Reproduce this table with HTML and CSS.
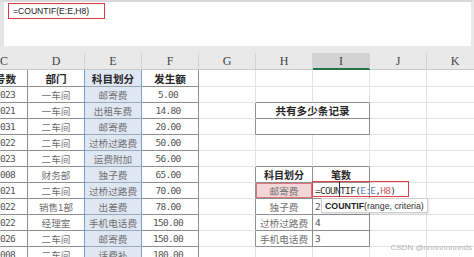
FILE: index.html
```html
<!DOCTYPE html>
<html lang="zh">
<head>
<meta charset="utf-8">
<link rel="stylesheet" href="styles.css">
</head>
<body>
<div class="fbar"><div class="fref">=COUNTIF(E:E,H8)</div></div>
<div class="sheet">
  <div class="ch"><span class="cl clc">C</span></div>
  <div class="ch"><span class="cl">D</span></div>
  <div class="ch"><span class="cl">E</span></div>
  <div class="ch"><span class="cl">F</span></div>
  <div class="ch"><span class="cl">G</span></div>
  <div class="ch"><span class="cl">H</span></div>
  <div class="ch on"><span class="cl">I</span></div>
  <div class="ch"><span class="cl">J</span></div>
  <div class="ch"><span class="cl">K</span></div>

  <div class="c t cc hd hcc">凭证号数</div>
  <div class="c t d hd">部门</div>
  <div class="c t e hd">科目划分</div>
  <div class="c t hd">发生额</div>
  <div class="c"></div><div class="c"></div><div class="c"></div><div class="c"></div><div class="c"></div>

  <div class="c t cc num">-023</div>
  <div class="c t d">一车间</div>
  <div class="c t e">邮寄费</div>
  <div class="c t num fn">5.00</div>
  <div class="c"></div><div class="c bb"></div><div class="c bb"></div><div class="c"></div><div class="c"></div>

  <div class="c t cc num">-021</div>
  <div class="c t d">一车间</div>
  <div class="c t e">出租车费</div>
  <div class="c t num fn">14.80</div>
  <div class="c br"></div><div class="c t span2 hd">共有多少条记录</div><div class="c"></div><div class="c"></div>

  <div class="c t cc num">-031</div>
  <div class="c t d">二车间</div>
  <div class="c t e">邮寄费</div>
  <div class="c t num fn">20.00</div>
  <div class="c br"></div><div class="c t span2"></div><div class="c"></div><div class="c"></div>

  <div class="c t cc num">-022</div>
  <div class="c t d">二车间</div>
  <div class="c t e">过桥过路费</div>
  <div class="c t num fn">50.00</div>
  <div class="c"></div><div class="c"></div><div class="c"></div><div class="c"></div><div class="c"></div>

  <div class="c t cc num">-023</div>
  <div class="c t d">二车间</div>
  <div class="c t e">运费附加</div>
  <div class="c t num fn">56.00</div>
  <div class="c"></div><div class="c bb"></div><div class="c bb"></div><div class="c"></div><div class="c"></div>

  <div class="c t cc num">-008</div>
  <div class="c t d">财务部</div>
  <div class="c t e">独子费</div>
  <div class="c t num fn">65.00</div>
  <div class="c br"></div><div class="c t hd hs">科目划分</div><div class="c t hd hs">笔数</div><div class="c"></div><div class="c"></div>

  <div class="c t cc num">-021</div>
  <div class="c t d">二车间</div>
  <div class="c t e">过桥过路费</div>
  <div class="c t num fn">70.00</div>
  <div class="c br"></div><div class="c t pk">邮寄费</div>
  <div class="c t il fx"><span class="fcell">=COUNTIF(<span class="rb">E:E</span>,<span class="rr">H8</span>)</span><span class="fbox"></span><span class="caret"></span></div>
  <div class="c"></div><div class="c"></div>

  <div class="c t cc num">-022</div>
  <div class="c t d">销售1部</div>
  <div class="c t e">出差费</div>
  <div class="c t num fn">78.00</div>
  <div class="c br"></div><div class="c t">独子费</div>
  <div class="c t num il">2<span class="tip"><b>COUNTIF</b>(range, criteria)</span></div>
  <div class="c"></div><div class="c"></div>

  <div class="c t cc num">-022</div>
  <div class="c t d">经理室</div>
  <div class="c t e">手机电话费</div>
  <div class="c t num fn">150.00</div>
  <div class="c br"></div><div class="c t">过桥过路费</div><div class="c t num il">4</div><div class="c"></div><div class="c"></div>

  <div class="c t cc num">-026</div>
  <div class="c t d">二车间</div>
  <div class="c t e">邮寄费</div>
  <div class="c t num fn">150.00</div>
  <div class="c br"></div><div class="c t">手机电话费</div><div class="c t num il">3</div><div class="c"></div><div class="c"></div>

  <div class="c t cc num">-008</div>
  <div class="c t d">二车间</div>
  <div class="c t e">话费补</div>
  <div class="c t num fn">180.00</div>
  <div class="c"></div><div class="c"></div><div class="c"></div><div class="c"></div><div class="c"></div>
</div>
<div class="wm">CSDN @nnnnnnnnnds</div>
</body>
</html>
```
FILE: styles.css
```css
html, body {
  margin: 0;
  padding: 0;
}
body {
  width: 474px;
  height: 257px;
  overflow: hidden;
  position: relative;
  background: #fff;
  font-family: "Noto Sans CJK SC", sans-serif;
}
.fbar {
  height: 46px;
  box-sizing: border-box;
  border-top: 2px solid #dadada;
  border-left: 4px solid #e4e4e4;
  border-right: 3px solid #e8e8e8;
  padding: 1px 0 0 4px;
  background: #fff;
}
.fref {
  box-sizing: border-box;
  width: 97px;
  height: 16px;
  border: 1.5px solid #db3a44;
  display: flex;
  align-items: center;
  padding-left: 4px;
  font: 8.6px "Liberation Sans", sans-serif;
  color: #222;
}
.sheet {
  display: grid;
  grid-template-columns: 28px repeat(8, 57px);
  grid-template-rows: 24px 17px repeat(11, 16px);
}
.ch {
  background: #e9e9e9;
  padding-top: 7px;
  display: flex;
  box-sizing: border-box;
  border-bottom: 1px solid #c9c9c9;
  overflow: hidden;
}
.cl {
  flex: 1;
  display: flex;
  align-items: center;
  justify-content: center;
  border-right: 1px solid #d2d2d2;
  font: 12px "Liberation Serif", serif;
  color: #444;
}
.clc {
  justify-content: flex-end;
  padding-right: 24px;
}
.ch.on {
  border-bottom-color: #217346;
}
.ch.on .cl {
  background: #d3d3d3;
  box-shadow: inset 0 -1px 0 #217346;
}
.c {
  box-sizing: border-box;
  border-right: 1px solid #e3e3e3;
  border-bottom: 1px solid #e3e3e3;
  display: flex;
  align-items: center;
  justify-content: center;
  white-space: nowrap;
  font-size: 9.6px;
  color: #707070;
  position: relative;
  min-width: 0;
}
.t {
  border-right-color: #8e8e8e;
  border-bottom-color: #8e8e8e;
}
.bb {
  border-bottom-color: #8e8e8e;
}
.br {
  border-right-color: #8e8e8e;
}
.d {
  border-right-color: #7d9dd0;
}
.e {
  background: #dfe7f3;
  border-right-color: #7d9dd0;
  border-bottom-color: #9aa7bb;
}
.hd {
  font-weight: 700;
  color: #262626;
  font-size: 10.6px;
}
.hs {
  font-size: 10px;
}
.span2 {
  grid-column: span 2;
}
.cc {
  justify-content: flex-end;
  padding-right: 12px;
  overflow: hidden;
}
.hcc {
  padding-right: 11px;
}
.num {
  font-family: "DejaVu Sans Mono", monospace;
  font-size: 9.5px;
  letter-spacing: -0.7px;
  color: #555;
}
.fn {
  padding-right: 4px;
}
.il {
  justify-content: flex-start;
  padding-left: 2px;
}
.pk {
  background: #f3d6d8;
  box-shadow: inset 0 0 0 1px #d97880;
}
.fx {
  overflow: visible;
}
.fcell {
  font-family: "DejaVu Sans Mono", monospace;
  font-size: 9.5px;
  letter-spacing: -0.7px;
  color: #333;
}
.rb {
  color: #5b84c4;
}
.rr {
  color: #d0606a;
}
.fbox {
  position: absolute;
  left: -1px;
  top: -2px;
  width: 97px;
  height: 16px;
  box-sizing: border-box;
  border: 1.5px solid #e0404a;
}
.caret {
  position: absolute;
  left: 26px;
  top: -2px;
  width: 1px;
  height: 16px;
  background: #333;
}
.tip {
  position: absolute;
  left: 8px;
  top: -1px;
  height: 15px;
  box-sizing: border-box;
  padding: 0 3px;
  display: flex;
  align-items: center;
  background: #fff;
  border: 1px solid #cfcfcf;
  box-shadow: 1px 1px 2px rgba(0, 0, 0, 0.12);
  font: 8.8px "Liberation Sans", sans-serif;
  letter-spacing: 0;
  color: #333;
  z-index: 2;
}
.tip b {
  color: #222;
}
.wm {
  position: absolute;
  right: 2px;
  bottom: 5px;
  font: 8px "Liberation Sans", sans-serif;
  color: #b3b3b3;
}
```
